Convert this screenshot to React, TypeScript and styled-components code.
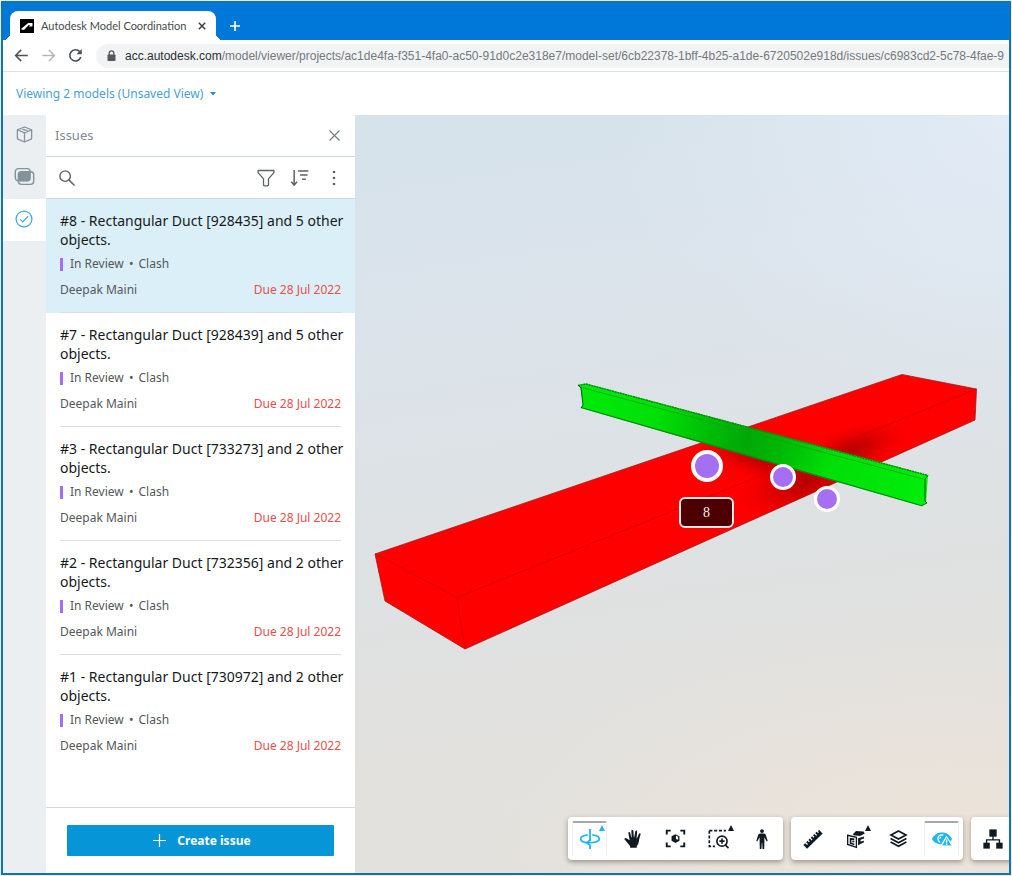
import React from 'react';
import styled, { createGlobalStyle } from 'styled-components';

const GlobalStyle = createGlobalStyle`
  *, *::before, *::after { box-sizing: border-box; }
  body { margin: 0; background: #d9f4fd; }
  button { border: 0; padding: 0; background: none; color: inherit; font: inherit; cursor: pointer; }
  svg { display: block; flex: none; }
`;

const uiFont = `'Noto Sans', 'Open Sans', sans-serif`;
const tabFont = `Lato, 'Open Sans', sans-serif`;
const addressFont = `'Liberation Sans', Arial, sans-serif`;

const Page = styled.div`
  display: flex;
  min-height: 100vh;
  padding: 1px;
  font-family: ${uiFont};
`;

const Frame = styled.div`
  flex: 1;
  min-width: 0;
  display: flex;
  flex-direction: column;
  border: 2px solid #1b6fae;
  background: #fff;
  overflow: hidden;
`;

const TabStrip = styled.header`
  display: flex;
  align-items: flex-end;
  height: 37px;
  padding-left: 7px;
  background: #0078d9;
  font-family: ${tabFont};
`;

const Tab = styled.div`
  position: relative;
  display: flex;
  align-items: center;
  width: 206px;
  height: 29px;
  padding: 0 8px 0 10px;
  border-radius: 8px 8px 0 0;
  background: #fff;
  color: #45494d;
  font-size: 11px;
  line-height: 16px;
  white-space: nowrap;

  &::before,
  &::after {
    content: '';
    position: absolute;
    bottom: 0;
    width: 7px;
    height: 7px;
  }
  &::before {
    left: -7px;
    background: radial-gradient(circle at 0 0, transparent 7px, #fff 7px);
  }
  &::after {
    right: -7px;
    background: radial-gradient(circle at 100% 0, transparent 7px, #fff 7px);
  }
`;

const TabTitle = styled.span`
  flex: 1;
  margin-left: 7px;
`;

const IconButton = styled.button<{ $w?: number; $h?: number }>`
  display: flex;
  align-items: center;
  justify-content: center;
  width: ${(p) => p.$w ?? 24}px;
  height: ${(p) => p.$h ?? 24}px;
`;

const NewTab = styled(IconButton)`
  margin: 0 0 2px 7px;
  color: #fff;
`;

const NavBar = styled.div`
  display: flex;
  align-items: center;
  height: 32px;
  padding-left: 5px;
  border-bottom: 1px solid #dfe1e3;
  background: #fff;
  font-family: ${addressFont};
`;

const Address = styled.div`
  flex: 1;
  min-width: 0;
  display: flex;
  align-items: center;
  gap: 9px;
  height: 24px;
  margin-left: 7px;
  padding-left: 11px;
  border-radius: 12px 0 0 12px;
  background: #f1f3f4;
  color: #75797d;
  font-size: 12px;
  line-height: 24px;
  white-space: nowrap;
  overflow: hidden;

  b { font-weight: 400; color: #2b2e31; }
`;

const ViewHeader = styled.div`
  display: flex;
  align-items: center;
  height: 43px;
  padding-left: 13px;
`;

const ViewMenu = styled.button`
  display: flex;
  align-items: center;
  gap: 7px;
  color: #4a9fd4;
  font-size: 12px;
  line-height: 18px;
`;

const Body = styled.div`
  flex: 1;
  display: flex;
`;

const Rail = styled.nav`
  flex: none;
  width: 43px;
  background: #ebeff2;
`;

const RailButton = styled(IconButton)<{ $active?: boolean }>`
  width: 43px;
  height: 42px;
  padding: 0 1px 3px 0;
  background: ${(p) => (p.$active ? '#fff' : 'transparent')};
  color: ${(p) => (p.$active ? '#3ba9e0' : '#84929c')};
`;

const Panel = styled.aside`
  flex: none;
  display: flex;
  flex-direction: column;
  width: 309px;
  background: #fff;
`;

const PanelHeader = styled.div`
  display: flex;
  align-items: center;
  justify-content: space-between;
  height: 42px;
  padding: 0 9px;
  border-bottom: 1px solid #d3d8db;
  color: #808a92;
`;

const PanelTitle = styled.h1`
  margin: 0;
  padding-bottom: 2px;
  font-size: 13px;
  font-weight: 400;
  line-height: 18px;
`;

const PanelTools = styled.div`
  display: flex;
  align-items: center;
  height: 42px;
  padding: 0 9px;
  border-bottom: 1px solid #d3d8db;
  color: #5f6467;
`;

const ToolsRight = styled.div`
  display: flex;
  gap: 10px;
  margin-left: auto;
`;

const IssueList = styled.ul`
  flex: 1;
  margin: 0;
  padding: 0;
  list-style: none;
`;

const Issue = styled.li<{ $active?: boolean }>`
  padding: 0 14px;
  background: ${(p) => (p.$active ? '#dbeff9' : '#fff')};
`;

const IssueInner = styled.div`
  height: 114px;
  padding-top: 12px;
  border-bottom: 1px solid #dcdfe1;

  li:last-child > & { border-bottom-color: transparent; }
`;

const IssueTitle = styled.h2`
  margin: 0 -8px 0 0;
  color: #16191b;
  font-size: 14px;
  font-weight: 400;
  line-height: 19px;
`;

const IssueStatus = styled.div`
  display: flex;
  align-items: center;
  gap: 7px;
  height: 18px;
  margin-top: 6px;
  color: #54585b;
  font-size: 12px;
  line-height: 18px;

  &::before {
    content: '';
    width: 3px;
    height: 13px;
    background: #a36ff0;
  }
`;

const Dot = styled.span`
  margin: 0 2px;
`;

const IssueFoot = styled.div`
  display: flex;
  justify-content: space-between;
  margin-top: 8px;
  color: #54585b;
  font-size: 12px;
  line-height: 18px;
`;

const Due = styled.span`
  color: #e5504c;
`;

const PanelFooter = styled.div`
  padding: 17px 21px;
  border-top: 1px solid #d3d8db;
`;

const CreateButton = styled.button`
  display: flex;
  align-items: center;
  justify-content: center;
  gap: 11px;
  width: 100%;
  height: 31px;
  padding-left: 3px;
  border-radius: 1px;
  background: #0696d7;
  color: #fff;
  font-size: 12px;
  font-weight: 700;
`;

const Viewer = styled.main`
  position: relative;
  flex: 1;
  min-width: 0;
  display: flex;
  justify-content: center;
  align-items: center;
  overflow: hidden;
  background:
    radial-gradient(ellipse 70% 28% at 90% 96%, rgba(238, 228, 218, 0.9), transparent),
    radial-gradient(ellipse 60% 45% at 100% 0, rgba(227, 236, 247, 0.9), transparent),
    linear-gradient(172deg, #d5e3eb 0%, #dbe3eb 22%, #dde2e5 46%, #e1e1df 72%, #e4e1db 100%);
`;

const Scene = styled.div`
  position: relative;
  flex: none;
  width: 654px;
  height: 758px;
`;

const Pin = styled.button<{ $x: number; $y: number; $size: number }>`
  position: absolute;
  left: ${(p) => p.$x - p.$size / 2}px;
  top: ${(p) => p.$y - p.$size / 2}px;
  width: ${(p) => p.$size}px;
  height: ${(p) => p.$size}px;
  border: ${(p) => (p.$size > 30 ? 4 : 3)}px solid #fff;
  border-radius: 50%;
  background: #a66ff2;
`;

const PinLabel = styled.div`
  position: absolute;
  left: 324px;
  top: 382px;
  width: 55px;
  height: 31px;
  border: 2px solid #fbe9e9;
  border-radius: 6px;
  background: #4c0000;
  color: #f4eeee;
  font: 14px/27px 'Liberation Serif', serif;
  text-align: center;
`;

const Toolbars = styled.div`
  position: absolute;
  left: 213px;
  bottom: 13px;
  display: flex;
  gap: 8px;
`;

const ToolGroup = styled.div`
  display: flex;
  align-items: center;
  height: 43px;
  border-radius: 4px;
  background: #fff;
  box-shadow: 0 2px 5px rgba(60, 50, 40, 0.45);
`;

const Tool = styled.button<{ $active?: boolean }>`
  position: relative;
  display: flex;
  align-items: center;
  justify-content: center;
  width: 43px;
  height: 43px;
  color: ${(p) => (p.$active ? '#1fb6f2' : '#111a21')};

  &::before {
    content: '';
    position: absolute;
    inset: 4px;
    border: solid #eceef0;
    border-width: 0 1px;
    border-top: 2px solid #a4a8ab;
    border-radius: 2px 2px 0 0;
    display: ${(p) => (p.$active ? 'block' : 'none')};
  }
  &[aria-haspopup]::after {
    content: '';
    position: absolute;
    top: 8px;
    right: 6px;
    border: 3px solid transparent;
    border-top: 0;
    border-bottom: 6px solid currentColor;
  }
`;

type IconProps = { size?: number; width?: number; children: React.ReactNode };
const Icon = ({ size = 24, width = 1.5, children }: IconProps) => (
  <svg width={size} height={size} viewBox="0 0 24 24" fill="none" stroke="currentColor" strokeWidth={width} aria-hidden="true">
    {children}
  </svg>
);

const Logo = () => (
  <svg width="14" height="14" viewBox="0 0 14 14" aria-hidden="true">
    <rect width="14" height="14" fill="#000" />
    <path d="M1.500 10.800V9.600L8.200 4H12c.4 0 .5.3.5.5V6.800c0 .4-.2.600-.5.600H9.300c-.4 0-.4-.3-.2-.5l1-.9H8.700L4.200 10.800Z" fill="#fff" />
  </svg>
);

const issues = [
  { id: 8, code: '928435', others: 5 },
  { id: 7, code: '928439', others: 5 },
  { id: 3, code: '733273', others: 2 },
  { id: 2, code: '732356', others: 2 },
  { id: 1, code: '730972', others: 2 },
];

const Model = () => (
  <svg width="654" height="758" viewBox="355 115 654 758" aria-label="Duct and beam clash" role="img">
    <defs>
      <clipPath id="duct">
        <path d="M375 554 902 374.500 976.500 389 975 420 465 649 385 601Z" />
      </clipPath>
      <radialGradient id="shade">
        <stop offset="0" stopColor="#700000" stopOpacity="0.5" />
        <stop offset="0.35" stopColor="#800000" stopOpacity="0.34" />
        <stop offset="0.7" stopColor="#900000" stopOpacity="0.12" />
        <stop offset="1" stopColor="#a00000" stopOpacity="0" />
      </radialGradient>
      <linearGradient id="beam" x1="582" y1="390" x2="925" y2="490" gradientUnits="userSpaceOnUse">
        <stop offset="0" stopColor="#00ea0a" />
        <stop offset="0.22" stopColor="#00e008" />
        <stop offset="0.38" stopColor="#00bc06" />
        <stop offset="0.48" stopColor="#00a805" />
        <stop offset="0.58" stopColor="#00b806" />
        <stop offset="0.72" stopColor="#00de08" />
        <stop offset="1" stopColor="#00ee0a" />
      </linearGradient>
    </defs>
    <path d="M375 554 902 374.500 976.500 389 975 420 465 649 385 601Z" fill="#fe0000" stroke="#a01c1c" strokeWidth="0.800" strokeLinejoin="round" />
    <g clipPath="url(#duct)">
      <ellipse cx="852" cy="450" rx="56" ry="24" fill="url(#shade)" transform="rotate(-18 852 450)" />
      <ellipse cx="806" cy="482" rx="72" ry="32" fill="url(#shade)" transform="rotate(-16 806 482)" />
      <ellipse cx="766" cy="460" rx="74" ry="22" fill="url(#shade)" transform="rotate(15 766 460)" />
    </g>
    <path d="M375 554 457 597.500 976.500 389M457 597.500 465 649" fill="none" stroke="#d40000" strokeWidth="0.800" />
    <path d="M578 385 586 383.500 928 475 926 503 921 506 581 408 583 405 580.500 388Z" fill="url(#beam)" />
    <path d="M578 385.500 586 384 928 475.500" fill="none" stroke="#0b8a0e" strokeWidth="1.500" strokeDasharray="2 0.700" />
    <path d="M580 387 923 479" fill="none" stroke="#08a80c" strokeWidth="0.800" />
    <path d="M581 407.500 921 505.500" fill="none" stroke="#0a8a0c" strokeWidth="1.300" />
    <path d="M578 385 581 388 583 405 581 408M928 475.500 925 479V501L927 503 921 506" fill="none" stroke="#06600a" strokeWidth="1" />
  </svg>
);

export default function App() {
  return (
    <Page>
      <GlobalStyle />
      <Frame>
        <TabStrip>
          <Tab>
            <Logo />
            <TabTitle>Autodesk Model Coordination</TabTitle>
            <IconButton $w={12} aria-label="Close tab">
              <svg width="8" height="8" viewBox="0 0 8 8" stroke="#3c4043" strokeWidth="1.500"><path d="m.8.8 6.400 6.400M7.200.8.8 7.200" /></svg>
            </IconButton>
          </Tab>
          <NewTab aria-label="New tab">
            <svg width="10" height="10" viewBox="0 0 10 10" stroke="currentColor" strokeWidth="1.600"><path d="M5 0v10M0 5h10" /></svg>
          </NewTab>
        </TabStrip>

        <NavBar>
          <IconButton $w={27} aria-label="Back">
            <Icon size={15} width={2.300}><path d="M22 12H3M11.500 3 2.500 12l9 9" stroke="#4d5156" /></Icon>
          </IconButton>
          <IconButton $w={27} aria-label="Forward">
            <Icon size={15} width={2.300}><path d="M2 12h19M12.500 3l9 9-9 9" stroke="#b4b7ba" /></Icon>
          </IconButton>
          <IconButton $w={27} aria-label="Reload">
            <Icon size={15} width={2.600}>
              <path d="M20.500 14.500A9 9 0 1 1 18.500 5.600L21 8" stroke="#4d5156" />
              <path d="M22 1.500V10h-8.500Z" fill="#4d5156" stroke="none" />
            </Icon>
          </IconButton>
          <Address>
            <svg width="9" height="12" viewBox="0 0 9 12" aria-hidden="true">
              <path d="M2.200 5V3.200a2.300 2.300 0 0 1 4.600 0V5" fill="none" stroke="#55595e" strokeWidth="1.300" />
              <rect x="0.500" y="4.500" width="8" height="6.500" rx="0.800" fill="#55595e" />
            </svg>
            <span><b>acc.autodesk.com</b>/model/viewer/projects/ac1de4fa-f351-4fa0-ac50-91d0c2e318e7/model-set/6cb22378-1bff-4b25-a1de-6720502e918d/issues/c6983cd2-5c78-4fae-9</span>
          </Address>
        </NavBar>

        <ViewHeader>
          <ViewMenu>
            Viewing 2 models (Unsaved View)
            <svg width="6" height="4" viewBox="0 0 6 4" aria-hidden="true"><path d="M0 0h6L3 3.500Z" fill="#1e8fd0" /></svg>
          </ViewMenu>
        </ViewHeader>

        <Body>
          <Rail>
            <RailButton aria-label="Models">
              <Icon size={19} width={1.600}><path d="M12 2.500 21 6v11.500L12 21.500 3 17.500V6ZM3 6l9 4 9-4M12 10v11.500M7.500 4.200l9 3.800" strokeLinejoin="round" /></Icon>
            </RailButton>
            <RailButton aria-label="Clashes">
              <Icon size={21} width={1.600}>
                <rect x="1.500" y="3" width="17" height="14" rx="3.500" />
                <rect x="5" y="6.500" width="17.500" height="14.500" rx="3.500" />
                <rect x="6.500" y="7.500" width="11" height="9" rx="1" fill="currentColor" />
              </Icon>
            </RailButton>
            <RailButton $active aria-label="Issues">
              <Icon size={20} width={1.500}><circle cx="12" cy="12" r="9.500" /><path d="m7.500 12.500 3 3 6.500-7" /></Icon>
            </RailButton>
          </Rail>

          <Panel>
            <PanelHeader>
              <PanelTitle>Issues</PanelTitle>
              <IconButton aria-label="Close panel">
                <svg width="11" height="11" viewBox="0 0 11 11" stroke="#767f86" strokeWidth="1.200"><path d="m.5.5 10 10M10.500.5l-10 10" /></svg>
              </IconButton>
            </PanelHeader>
            <PanelTools>
              <IconButton aria-label="Search">
                <Icon size={18} width={1.900}><circle cx="9.500" cy="9.500" r="7" /><path d="m14.500 14.500 7.500 7.500" /></Icon>
              </IconButton>
              <ToolsRight>
                <IconButton aria-label="Filter">
                  <Icon size={20} width={1.600}><path d="M2.500 3h19v2.500L15 13v7.500l-1.500 1h-3l-1.500-1V13L2.500 5.500Z" strokeLinejoin="round" /></Icon>
                </IconButton>
                <IconButton aria-label="Sort">
                  <Icon size={20} width={1.800}><path d="M5 2.500v17.500M1.500 16.500l3.500 4 3.500-4M9.500 3.500H22M12 8.500h9M14.500 13.500h4.500" /></Icon>
                </IconButton>
                <IconButton aria-label="More">
                  <Icon size={18} width={0}><g fill="currentColor"><circle cx="12" cy="4" r="1.800" /><circle cx="12" cy="12" r="1.800" /><circle cx="12" cy="20" r="1.800" /></g></Icon>
                </IconButton>
              </ToolsRight>
            </PanelTools>

            <IssueList>
              {issues.map((issue) => (
                <Issue key={issue.id} $active={issue.id === 8}>
                  <IssueInner>
                    <IssueTitle>{`#${issue.id} - Rectangular Duct [${issue.code}] and ${issue.others} other objects.`}</IssueTitle>
                    <IssueStatus>
                      <span>In Review <Dot>•</Dot> Clash</span>
                    </IssueStatus>
                    <IssueFoot>
                      <span>Deepak Maini</span>
                      <Due>Due 28 Jul 2022</Due>
                    </IssueFoot>
                  </IssueInner>
                </Issue>
              ))}
            </IssueList>

            <PanelFooter>
              <CreateButton>
                <svg width="13" height="13" viewBox="0 0 13 13" stroke="currentColor" strokeWidth="1.200" aria-hidden="true"><path d="M6.500 0v13M0 6.500h13" /></svg>
                Create issue
              </CreateButton>
            </PanelFooter>
          </Panel>

          <Viewer>
            <Scene>
              <Model />
              <Pin $x={352} $y={351} $size={32} aria-label="Issue pin" />
              <Pin $x={428} $y={362} $size={26} aria-label="Issue pin" />
              <Pin $x={472} $y={384} $size={26} aria-label="Issue pin" />
              <PinLabel>8</PinLabel>
            </Scene>
            <Toolbars>
              <ToolGroup>
                <Tool $active aria-haspopup="menu" aria-label="Orbit">
                  <Icon size={22} width={2}>
                    <path d="M12 1v12M12 19v4M9.500 7.500C5 8 1.800 9.500 1.800 12c0 2.200 3.700 3.800 8.200 4M14.500 7.500c4.500.5 7.700 2 7.700 4.500s-3.500 4-12.200 4.200" />
                    <path d="M13 12.500 8.500 16l4.500 3.500" strokeLinejoin="round" />
                  </Icon>
                </Tool>
                <Tool aria-label="Pan">
                  <Icon size={20} width={0}>
                    <path fill="currentColor" d="M8 13.500 6.500 5c-.3-1.600 1.700-2 2.100-.5L10 10h.5L10 2.500c0-1.700 2.300-1.700 2.500 0L13 10h.5l1.200-7c.3-1.600 2.400-1.300 2.300.3L16.300 11h.5l2.200-5c.7-1.400 2.500-.7 2 .8-1 3.200-1.500 5.200-2 8.200-.5 3.200-1.800 4.500-2.500 5.500V22.500H8.500v-2L2.200 13c-1.200-1.500.3-2.800 1.800-1.900Z" />
                  </Icon>
                </Tool>
                <Tool aria-label="Fit to view">
                  <Icon size={21} width={2.200}>
                    <path d="M2 7.500V3h4.500M17.500 3H22v4.500M22 16.500V21h-4.500M6.500 21H2v-4.500" />
                    <path d="m12 7 4.500 2.500v5L12 17l-4.500-2.500v-5Z" fill="currentColor" stroke="none" />
                    <path d="m12.500 8.500 2.500 1.500v3.500l-2.500-1Z" fill="#fff" stroke="none" />
                  </Icon>
                </Tool>
                <Tool aria-haspopup="menu" aria-label="Zoom window">
                  <Icon size={21} width={1.900}>
                    <path d="M1.500 3h19M1.500 3v18H8" strokeDasharray="3.500 2" />
                    <circle cx="16" cy="15" r="5.800" />
                    <path d="m20 19.500 3.500 3.500M13 15h6M16 12v6" />
                  </Icon>
                </Tool>
                <Tool aria-label="First person">
                  <Icon size={22} width={0}>
                    <g fill="currentColor"><circle cx="12" cy="3.400" r="2.100" /><path d="M9.500 6h5l1.500 1 2.200 7-1 .6-2.600-4.600V15l-.2 8h-1.800l-.4-7h-.4l-.4 7H9.600L9.400 15v-5L6.800 14.600l-1-.6L8 7Z" /></g>
                  </Icon>
                </Tool>
              </ToolGroup>
              <ToolGroup>
                <Tool aria-label="Measure">
                  <Icon size={22} width={0}>
                    <path fill="currentColor" d="M1.500 18.500 3.500 16.500l2 2 1-1-2-2L6 14l1.500 1.500 1-1L7 13l1.500-1.500 2 2 1-1-2-2L11 9l1.500 1.500 1-1L12 8l1.500-1.500 2 2 1-1-2-2L16 4l1.500 1.500 1-1L17.500 3.500 18.500 2 22.500 6 5.500 22.500Z" />
                  </Icon>
                </Tool>
                <Tool aria-haspopup="menu" aria-label="Section">
                  <Icon size={20} width={1.600}>
                    <path d="M2 7.500 12.500 10v12L2 18.500Z" />
                    <path d="M8.500 6 12 2.500l9 .5 1.500 2.500-5.500 3-8-1ZM14.500 11l7-2v2.500l-4 1.500v2l4-1V16l-7 3.500Z" fill="currentColor" stroke="none" />
                    <path d="M10 12.500 5.500 11.800V17l4.500 1.500M7.500 15H10" strokeWidth="2" />
                  </Icon>
                </Tool>
                <Tool aria-label="Layers">
                  <Icon size={21} width={2}>
                    <path d="M12 3.500 20.500 8 12 12.500 3.500 8ZM3 12l9 4.800 9-4.800M3 16l9 4.800 9-4.800" />
                  </Icon>
                </Tool>
                <Tool $active aria-label="Issue visibility">
                  <Icon size={22} width={0}>
                    <path fill="currentColor" d="M1 12C4 7 7.500 5 12 5s8 2 11 7c-.6 1.400-1.400 2.300-2 3l-4-6.500-6 9.500C7 17.800 3.500 16 1 12Z" />
                    <path d="M13.500 7.800a4.300 4.300 0 1 0-3.300 8M11 9.800a2.200 2.200 0 0 0-1.300 2" fill="none" stroke="#fff" strokeWidth="1.400" />
                    <path d="m17 9.500 6 10H11.500Z" fill="currentColor" stroke="#fff" strokeWidth="1" />
                    <path d="M17 12.500v3.500M17 17v1.500" stroke="#fff" strokeWidth="1.500" />
                  </Icon>
                </Tool>
              </ToolGroup>
              <ToolGroup>
                <Tool aria-label="Model browser">
                  <Icon size={22} width={1.500}>
                    <g fill="currentColor" stroke="none"><rect x="8" y="1.500" width="8" height="8" /><rect x="1.500" y="16" width="7" height="6.500" /><rect x="15.500" y="16" width="7" height="6.500" /></g>
                    <path d="M12 9v4M5 16.500V13h14v3.500" />
                  </Icon>
                </Tool>
              </ToolGroup>
            </Toolbars>
          </Viewer>
        </Body>
      </Frame>
    </Page>
  );
}
